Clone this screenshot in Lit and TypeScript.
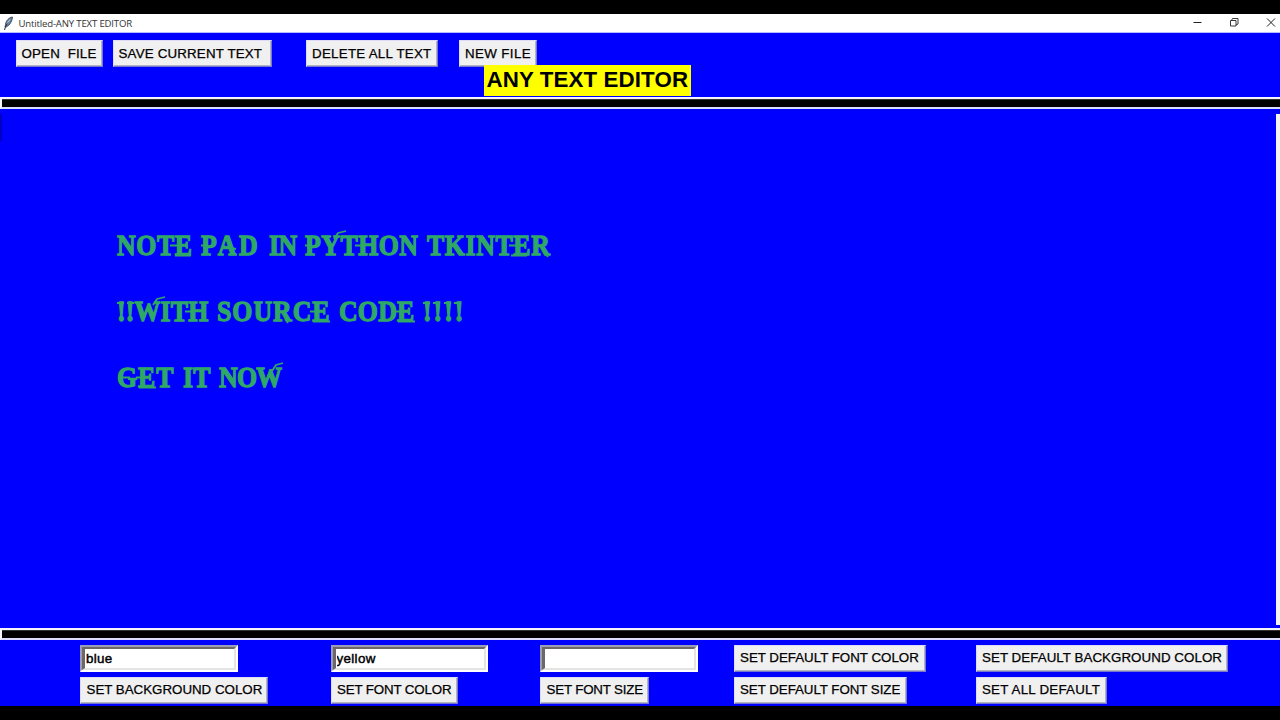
import { LitElement, html, css } from "lit";
import { customElement } from "lit/decorators.js";

const ctx = document.createElement("canvas").getContext("2d")!;

/* Letter spacing that makes a text fill the given width. */
const tracking = (text: string, font: string, width: number) => {
  ctx.font = font;
  return (width - ctx.measureText(text).width) / text.length;
};

const UI = '13.33px "Liberation Sans"';
const NOTE = 'bold 30px "Liberation Serif"';
const CONDENSE = 0.86;

@customElement("app-root")
export class AppRoot extends LitElement {
  static styles = css`
    :host { display: flex; flex-direction: column; width: 1280px; height: 720px; overflow: hidden;
      box-sizing: border-box; padding: 14px 0; background: #000; color: #000;
      font: 13.33px "Liberation Sans", Arial, sans-serif; }
    * { box-sizing: border-box; }
    .titlebar { height: 19px; background: #fff; display: flex; align-items: center; flex: none;
      border-bottom: 1px solid #b9b9ff; padding-left: 3px; }
    .feather { width: 11px; height: 15px; }
    .caption { font: 9.6px/17px "Open Sans", sans-serif; color: #333; margin-left: 4.5px; flex: 1; white-space: pre; }
    .controls { width: 90px; height: 18px; flex: none; }
    .toolbar { height: 64px; background: #00f; position: relative; display: flex; padding: 7px 0 0 15.5px; flex: none; }
    .gap1 { width: 10px; } .gap2 { width: 34px; } .gap3 { width: 21px; }
    .btn { all: unset; box-sizing: border-box; height: 27px; background: #f0f0f0; color: #000;
      border: 1px solid #7878d0; border-top-color: #dcdcf8; border-left-color: #dcdcf8;
      box-shadow: inset -1px -1px #b4b4bc;
      padding-left: 5px; line-height: 26px; white-space: pre; flex: none; -webkit-text-stroke: 0.25px #000; }
    .footer .btn { line-height: 24px; padding-left: 5.5px; }
    .banner { position: absolute; left: 484px; top: 32px; width: 207px; height: 31px; background: #ff0;
      font: bold 22.3px/29px "Liberation Sans", Arial, sans-serif; padding-left: 2.5px; white-space: pre; }
    .rule { flex: none; height: 12px; background: #000; border: 2px solid #f4f4ff; border-right: 0;
      border-bottom-color: #dcdcff; box-shadow: inset 0 1px #333; }
    .editor { flex: none; height: 519px; background: #00f; display: flex; justify-content: space-between; padding: 5px 0 3px; }
    .caret { width: 2px; height: 27px; background: #0000c4; }
    .note { flex: 1; padding: 114px 0 0 115px; color: #2fa866; font: bold 30px/34px "Liberation Serif", serif;
      display: flex; flex-direction: column; gap: 32px; -webkit-text-stroke: 1.3px #2fa866; }
    .line { display: flex; gap: 9px; height: 34px; white-space: pre; position: relative; }
    .word { flex: none; }
    .glyphs { display: block; transform: scaleX(0.86); transform-origin: 0 0; }
    .flourish { position: absolute; left: 0; top: -4px; width: 450px; height: 40px; fill: none;
      stroke: #2fa866; stroke-width: 1.8; stroke-linejoin: round; }
    .scroll { width: 4px; background: #f4f4f4; }
    .footer { flex: none; height: 66px; background: #00f; display: grid; align-content: start;
      grid-template-columns: 250.500px 209.500px 193.500px 242px 280px; grid-template-rows: 27px 27px; row-gap: 5px;
      padding: 4.500px 0 0 80px; }
    .entry { width: 157.5px; height: 27px; border: 2px solid; border-color: #9c9cb4 #fff #fff #9c9cb4; }
    .sunken { height: 23px; background: #fff; border: 3px solid; border-width: 2px 2px 2px 3px;
      border-color: #6c6868 #e3e5e3 #e3e5e3 #6c6868; display: flex; }
    .text { all: unset; width: 100%; padding-left: 1px; font: 13.33px/17px "Liberation Sans", Arial, sans-serif;
      color: #000; -webkit-text-stroke: 0.45px #000; letter-spacing: 0.35px; }
  `;

  btn(label: string, width: number, textWidth: number) {
    const ls = tracking(label, UI, textWidth);
    return html`<button class="btn" style="width:${width}px;letter-spacing:${ls}px">${label}</button>`;
  }

  entry(value: string) {
    return html`<div class="entry"><div class="sunken"><input class="text" .value=${value} /></div></div>`;
  }

  /* One line of the note, with the swashes that run past its letters. */
  line(words: [string, number][], swashes: string) {
    return html`<div class="line">${words.map(([w, width]) => html`<span class="word" style="width:${width}px"><span
      class="glyphs" style="letter-spacing:${tracking(w, NOTE, (width + 0.5) / CONDENSE)}px">${w}</span></span>`)}
      <svg class="flourish" viewBox="0 0 450 40"><path d=${swashes}/></svg></div>`;
  }

  render() {
    return html`
      <div class="titlebar">
        <svg class="feather" viewBox="0 0 11 15">
          <path d="M9.500 1C6 1.500 3 4.500 2.500 8.500L2 11l1.500-.2C7 9 9 5.500 9.500 1Z" fill="#6e86a6" stroke="#283848" stroke-width=".8"/>
          <path d="M1.500 14C2.500 9.500 5 5.500 8 3" fill="none" stroke="#222e42"/>
          <path d="M4 7.500L7.500 3" stroke="#bcd0e6" stroke-width="1"/>
        </svg>
        <span class="caption" style="letter-spacing:${tracking("Untitled-ANY TEXT EDITOR", '9.6px "Open Sans"', 113.5)}px">Untitled-ANY TEXT EDITOR</span>
        <svg class="controls" viewBox="0 0 90 18" fill="none" stroke="#222" stroke-width="1">
          <path d="M3.500 8.500H11.500"/>
          <path d="M40.500 6.500h5.500v5.500h-5.500zM41.500 6.500l1-2h5.500v5.500l-2 1" stroke-width=".9"/>
          <path d="M77 4.500l8 8M85 4.500l-8 8"/>
        </svg>
      </div>
      <div class="toolbar">
        ${this.btn("OPEN  FILE", 87, 75)}<span class="gap1"></span>
        ${this.btn("SAVE CURRENT TEXT ", 159.5, 148)}<span class="gap2"></span>
        ${this.btn("DELETE ALL TEXT", 132, 121)}<span class="gap3"></span>
        ${this.btn("NEW FILE", 77.5, 66)}
        <div class="banner" style="letter-spacing:${tracking("ANY TEXT EDITOR", 'bold 22.3px "Liberation Sans"', 202)}px">ANY TEXT EDITOR</div>
      </div>
      <div class="rule"></div>
      <div class="editor">
        <span class="caret"></span>
        <div class="note">
          ${this.line([["NOTE", 75], ["PAD", 59], ["IN", 27], ["PYTHON", 113], ["TKINTER", 123]],
            "M53 21.500h8M58 31.500h16M84 21.500h7M105 22l14 3M188 21.500h7M217 15l4-6 8-2M238 21.500h8M392 21.500h8M394 31.500h16M428 29l3 4")}
          ${this.line([["!!WITH", 91], ["SOURCE", 113], ["CODE", 75], ["!!!!", 42]],
            "M0 13h7M10 13h7M36 15l4-6 8-2M68 21.500h8M168 29l3 4M193 21.500h8M196 31.500h17M278 21.500h8M281 31.500h17M306 13h7M316 13h7M327 13h7M337 13h7")}
          ${this.line([["GET", 57], ["IT", 27], ["NOW", 62]],
            "M5 21.500h8M19 21.500h8M22 31.500h17M155 15l4-6 7-2")}
        </div>
        <div class="scroll"></div>
      </div>
      <div class="rule"></div>
      <div class="footer">
        ${this.entry("blue")}${this.entry("yellow")}${this.entry("")}
        ${this.btn("SET DEFAULT FONT COLOR", 192, 179.5)}
        ${this.btn("SET DEFAULT BACKGROUND COLOR", 252, 240.5)}
        ${this.btn("SET BACKGROUND COLOR", 188, 176)}
        ${this.btn("SET FONT COLOR", 127, 115)}
        ${this.btn("SET FONT SIZE", 109, 97)}
        ${this.btn("SET DEFAULT FONT SIZE", 173, 161)}
        ${this.btn("SET ALL DEFAULT", 131, 119.5)}
      </div>
    `;
  }
}
